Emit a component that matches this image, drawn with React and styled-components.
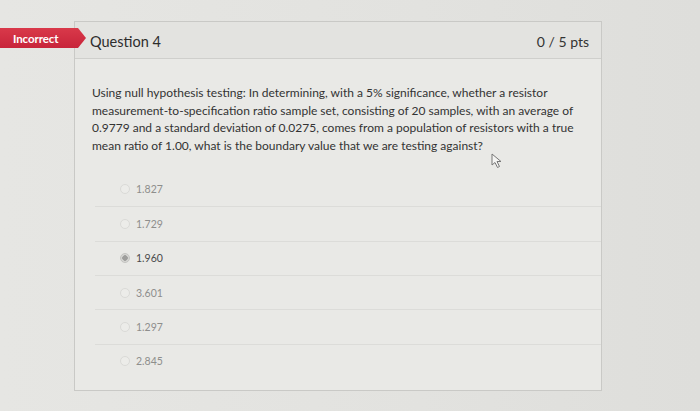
import React from "react";
import styled, { createGlobalStyle } from "styled-components";

const Global = createGlobalStyle`
  html, body { margin: 0; padding: 0; }
  body {
    background: #e3e3e0;
    font-family: Lato, "Open Sans", sans-serif;
    width: 700px;
    height: 411px;
    overflow: hidden;
  }
`;

const Page = styled.div`
  position: relative;
  height: 411px;
  padding: 21px 0 0 74px;
  box-sizing: border-box;
  background: linear-gradient(90deg, #e6e6e3 0%, #e2e2df 60%, #dededb 100%);
`;

const Badge = styled.div`
  position: absolute;
  left: 0;
  top: 28px;
  height: 20px;
  width: 86px;
  background: linear-gradient(180deg, #d9394a 0%, #c8243a 100%);
  clip-path: polygon(0 0, 78px 0, 86px 50%, 78px 100%, 0 100%);
  color: #fff;
  font-weight: 700;
  font-size: 11.5px;
  display: flex;
  align-items: center;
  padding-left: 13px;
  box-sizing: border-box;
  letter-spacing: -0.1px;
`;

const Card = styled.div`
  width: 528px;
  height: 370px;
  border: 1px solid #c9c9c6;
  background: #e9e9e6;
  box-sizing: border-box;
  display: flex;
  flex-direction: column;
`;

const Header = styled.div`
  height: 37px;
  background: #e3e3e0;
  border-bottom: 1px solid #cfcfcc;
  display: flex;
  align-items: center;
  justify-content: space-between;
  padding: 3px 12px 0 15px;
  box-sizing: border-box;
`;

const Title = styled.span`
  font-size: 14.5px;
  color: #2d2d2d;
`;

const Points = styled.span`
  font-size: 14px;
  color: #333;
`;

const Body = styled.div`
  padding: 25px 20px 0 17px;
`;

const Prompt = styled.p`
  margin: 0;
  font-size: 12px;
  line-height: 17.7px;
  color: #333;
  width: 490px;
`;

const Answers = styled.div`
  margin-top: 17px;
  margin-left: 3px;
  margin-right: -20px;
  display: flex;
  flex-direction: column;
`;

const Row = styled.div`
  height: 34.4px;
  display: flex;
  align-items: center;
  padding-left: 25px;
  border-top: ${(p) => (p.$first ? "none" : "1px solid #dcdcd9")};
  box-sizing: border-box;
  gap: 6px;
`;

const Radio = styled.span`
  width: 8px;
  height: 8px;
  border-radius: 50%;
  border: 1px solid ${(p) => (p.$checked ? "#c4c4c1" : "#dadad7")};
  background: ${(p) => (p.$checked ? "radial-gradient(circle, #9e9e9c 0 2.5px, #d6d6d3 3px)" : "#ecece9")};
  flex: none;
`;

const AnswerText = styled.span`
  font-size: 10.5px;
  color: ${(p) => (p.$checked ? "#4a4a4a" : "#8e8e8c")};
`;

const Cursor = styled.svg`
  position: absolute;
  left: 491px;
  top: 153px;
`;

const answers = ["1.827", "1.729", "1.960", "3.601", "1.297", "2.845"];

export default function App() {
  return (
    <>
      <Global />
      <Page>
        <Badge>Incorrect</Badge>
        <Card>
          <Header>
            <Title>Question 4</Title>
            <Points>0 / 5 pts</Points>
          </Header>
          <Body>
            <Prompt>
              Using null hypothesis testing: In determining, with a 5% significance, whether a resistor
              measurement-to-specification ratio sample set, consisting of 20 samples, with an average of
              0.9779 and a standard deviation of 0.0275, comes from a population of resistors with a true
              mean ratio of 1.00, what is the boundary value that we are testing against?
            </Prompt>
            <Answers>
              {answers.map((a, i) => (
                <Row key={a} $first={i === 0}>
                  <Radio $checked={a === "1.960"} />
                  <AnswerText $checked={a === "1.960"}>{a}</AnswerText>
                </Row>
              ))}
            </Answers>
          </Body>
        </Card>
        <Cursor width="14" height="16" viewBox="0 0 14 16">
          <path d="M1 1 L1 12 L4 9.5 L6.5 14.5 L8.5 13.5 L6 8.5 L10 8.5 Z" fill="#f4f4f2" stroke="#777" strokeWidth="1" />
        </Cursor>
      </Page>
    </>
  );
}
